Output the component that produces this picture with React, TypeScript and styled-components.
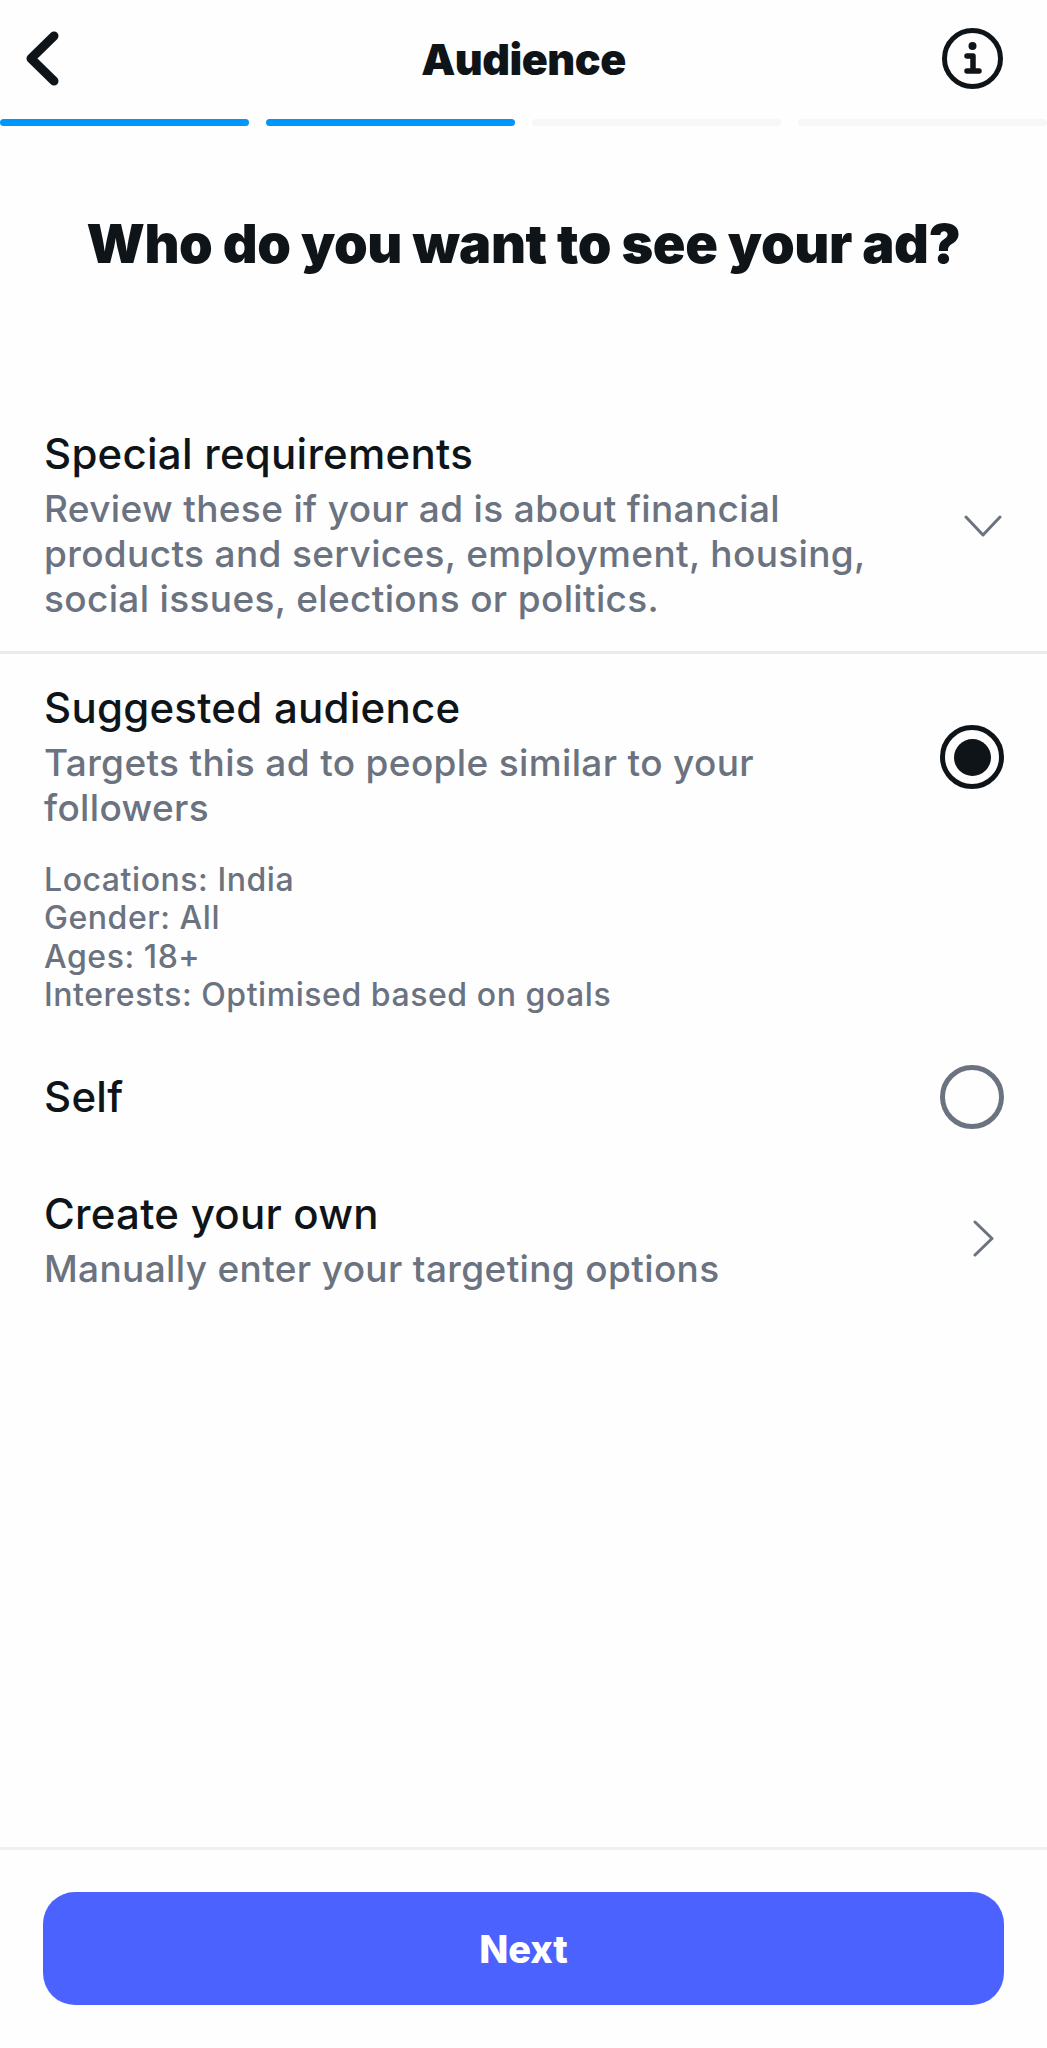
import React from "react";
import styled, { createGlobalStyle } from "styled-components";

const GlobalStyle = createGlobalStyle`
    html, body {
        margin: 0;
        padding: 0;
        background: #fefefe;
    }
    * {
        box-sizing: border-box;
    }
`;

const Page = styled.div`
    width: 1047px;
    height: 2048px;
    display: flex;
    flex-direction: column;
    overflow: hidden;
    background: #fefefe;
    color: #0f1419;
    font-family: Inter, "Liberation Sans", sans-serif;
`;

const TopBar = styled.header`
    height: 119px;
    padding: 0 44px 2px 26px;
    display: flex;
    align-items: center;
    justify-content: space-between;
    position: relative;
`;

const TopTitle = styled.div`
    position: absolute;
    left: 0;
    right: 0;
    top: 35px;
    text-align: center;
    font-size: 43px;
    line-height: 48px;
    font-weight: 900;
    letter-spacing: -0.5px;
`;

const Progress = styled.div`
    display: flex;
    gap: 17px;
    height: 7px;
`;

const Segment = styled.div<{ $done?: boolean }>`
    flex: 1;
    border-radius: 4px;
    background: ${(p) => (p.$done ? "#0096fa" : "#f7f7f8")};
`;

const Heading = styled.h1`
    margin: 87px 0 0;
    text-align: center;
    font-size: 54px;
    line-height: 62px;
    font-weight: 900;
    letter-spacing: -0.4px;
`;

const Body = styled.main`
    flex: 1;
    padding-top: 155px;
`;

const Row = styled.div`
    padding: 0 43px 0 44px;
    display: flex;
    align-items: center;
    justify-content: space-between;
`;

const SpecialRow = styled(Row)`
    padding-bottom: 30px;
    border-bottom: 3px solid #e9ebee;
`;

const SuggestedRow = styled(Row)`
    align-items: flex-start;
    padding-top: 30px;
`;

const SelfRow = styled(Row)`
    margin-top: 50px;
`;

const CreateRow = styled(Row)`
    margin-top: 61px;
`;

const RowText = styled.div`
    width: 840px;
`;

const RowTitle = styled.div<{ $gap?: boolean }>`
    font-size: 42px;
    line-height: 48px;
    font-weight: 540;
    letter-spacing: 0.25px;
    margin-bottom: ${(p) => (p.$gap ? "8px" : "0")};
`;

const RowSub = styled.div`
    font-size: 37px;
    line-height: 45px;
    font-weight: 500;
    letter-spacing: 0.35px;
    color: #6b7280;
`;

const Details = styled.div`
    margin-top: 31px;
    font-size: 32px;
    line-height: 38.4px;
    font-weight: 500;
    letter-spacing: 0.55px;
    color: #6b7280;
`;

const Radio = styled.div<{ $checked?: boolean }>`
    width: 64px;
    height: 64px;
    flex: none;
    margin-top: ${(p) => (p.$checked ? "41px" : "0")};
    border-radius: 50%;
    border: 5px solid ${(p) => (p.$checked ? "#0f1419" : "#6b7280")};
    display: flex;
    align-items: center;
    justify-content: center;
`;

const RadioDot = styled.div`
    width: 37px;
    height: 37px;
    border-radius: 50%;
    background: #0f1419;
`;

const Footer = styled.footer`
    height: 201px;
    border-top: 3px solid #eef0f4;
    padding: 42px 43px 0;
`;

const NextButton = styled.button`
    display: block;
    width: 100%;
    height: 113px;
    border: none;
    border-radius: 32px;
    background: #4c62ff;
    color: #ffffff;
    font-family: inherit;
    font-size: 38px;
    font-weight: 800;
`;

const DownSvg = styled.svg`
    margin-right: 2px;
`;

const RightSvg = styled.svg`
    margin: 0 10px 3px 0;
`;

const BackIcon = () => (
    <svg width="33" height="55" viewBox="0 0 33 55" fill="none">
        <path d="M28 5L5 27.5L28 50" stroke="#0f1419" strokeWidth="9" strokeLinecap="round" strokeLinejoin="round" />
    </svg>
);

const InfoIcon = () => (
    <svg width="61" height="61" viewBox="0 0 61 61" fill="none">
        <circle cx="30.5" cy="30.5" r="28" stroke="#0f1419" strokeWidth="5" />
        <circle cx="30.5" cy="18" r="4" fill="#0f1419" />
        <path d="M25 28H31V43M25 43H37" stroke="#0f1419" strokeWidth="5.5" strokeLinecap="round" strokeLinejoin="round" />
    </svg>
);

const ChevronDown = () => (
    <DownSvg width="38" height="22" viewBox="0 0 38 22" fill="none">
        <path d="M2 2L19 20L36 2" stroke="#6b7280" strokeWidth="3" strokeLinecap="round" strokeLinejoin="round" />
    </DownSvg>
);

const ChevronRight = () => (
    <RightSvg width="21" height="37" viewBox="0 0 21 37" fill="none">
        <path d="M2 2L19 18.5L2 35" stroke="#6b7280" strokeWidth="3" strokeLinecap="round" strokeLinejoin="round" />
    </RightSvg>
);

const App = () => {
    const steps = [true, true, false, false];

    return (
        <Page>
            <GlobalStyle />
            <TopBar>
                <BackIcon />
                <TopTitle>Audience</TopTitle>
                <InfoIcon />
            </TopBar>
            <Progress>
                {steps.map((done, index) => (
                    <Segment key={index} $done={done} />
                ))}
            </Progress>
            <Heading>Who do you want to see your ad?</Heading>
            <Body>
                <SpecialRow>
                    <RowText>
                        <RowTitle $gap>Special requirements</RowTitle>
                        <RowSub>
                            Review these if your ad is about financial
                            <br />
                            products and services, employment, housing,
                            <br />
                            social issues, elections or politics.
                        </RowSub>
                    </RowText>
                    <ChevronDown />
                </SpecialRow>
                <SuggestedRow>
                    <RowText>
                        <RowTitle $gap>Suggested audience</RowTitle>
                        <RowSub>
                            Targets this ad to people similar to your
                            <br />
                            followers
                        </RowSub>
                        <Details>
                            Locations: India
                            <br />
                            Gender: All
                            <br />
                            Ages: 18+
                            <br />
                            Interests: Optimised based on goals
                        </Details>
                    </RowText>
                    <Radio $checked>
                        <RadioDot />
                    </Radio>
                </SuggestedRow>
                <SelfRow>
                    <RowTitle>Self</RowTitle>
                    <Radio />
                </SelfRow>
                <CreateRow>
                    <RowText>
                        <RowTitle $gap>Create your own</RowTitle>
                        <RowSub>Manually enter your targeting options</RowSub>
                    </RowText>
                    <ChevronRight />
                </CreateRow>
            </Body>
            <Footer>
                <NextButton>Next</NextButton>
            </Footer>
        </Page>
    );
};

export default App;
